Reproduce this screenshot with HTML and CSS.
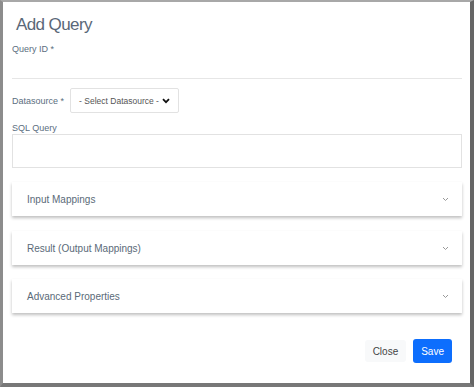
FILE: index.html
```html
<!DOCTYPE html>
<html lang="en">
<head>
<meta charset="UTF-8">
<title>Add Query</title>
<link rel="stylesheet" href="styles.css">
</head>
<body>
<div class="modal">
  <h1 class="modal-title">Add Query</h1>

  <div class="field">
    <label class="field-label">Query ID *</label>
    <div class="line-input"></div>
  </div>

  <div class="field field-inline">
    <label class="field-label">Datasource *</label>
    <div class="select-box">
      <span>- Select Datasource -</span>
      <svg width="8" height="6" viewBox="0 0 8 6"><path d="M1 1.2 L4 4.2 L7 1.2" fill="none" stroke="#111" stroke-width="1.8"/></svg>
    </div>
  </div>

  <div class="field field-sql">
    <label class="field-label">SQL Query</label>
    <div class="text-area"></div>
  </div>

  <div class="panel">
    <span>Input Mappings</span>
    <svg class="chev" width="7" height="5" viewBox="0 0 7 5"><path d="M1 1 L3.5 3.5 L6 1" fill="none" stroke="#999" stroke-width="1"/></svg>
  </div>
  <div class="panel">
    <span>Result (Output Mappings)</span>
    <svg class="chev" width="7" height="5" viewBox="0 0 7 5"><path d="M1 1 L3.5 3.5 L6 1" fill="none" stroke="#999" stroke-width="1"/></svg>
  </div>
  <div class="panel panel-last">
    <span>Advanced Properties</span>
    <svg class="chev" width="7" height="5" viewBox="0 0 7 5"><path d="M1 1 L3.5 3.5 L6 1" fill="none" stroke="#999" stroke-width="1"/></svg>
  </div>

  <div class="footer">
    <button class="btn btn-close">Close</button>
    <button class="btn btn-save">Save</button>
  </div>
</div>
</body>
</html>
```

FILE: styles.css
```css
body {
  margin: 0;
  font-family: 'Liberation Sans', Arial, sans-serif;
  background-color: #ffffff;
}

.modal {
  width: 474px;
  height: 387px;
  box-sizing: border-box;
  border-top: 2px solid #a8a8a8;
  border-left: 3px solid #8c8c8c;
  border-right: 4px solid #666666;
  border-bottom: 4px solid #777777;
  padding: 0 8px 0 9px;
  background-color: #ffffff;
  display: flex;
  flex-direction: column;
}

.modal-title {
  font-size: 17px;
  letter-spacing: -0.6px;
  font-weight: normal;
  color: #5a6878;
  margin: 0;
  padding: 12px 0 0 4px;
  line-height: 22px;
}

.field-label {
  font-size: 9px;
  line-height: 12px;
  color: #5b6e80;
  display: block;
  white-space: nowrap;
}

.field {
  margin-top: 7px;
}

.line-input {
  height: 23px;
  border-bottom: 1px solid #e6e6e6;
}

.field-inline {
  display: flex;
  align-items: center;
  margin-top: 9px;
}

.field-inline .field-label {
  margin-right: 6px;
}

.select-box {
  height: 23px;
  width: 107px;
  border: 1px solid #e2e2e2;
  border-radius: 2px;
  display: flex;
  align-items: center;
  justify-content: center;
  gap: 3px;
  font-size: 8.5px;
  color: #555;
}

.field-sql {
  margin-top: 9px;
}

.text-area {
  height: 32px;
  border: 1px solid #e2e2e2;
}

.panel {
  height: 34px;
  margin-top: 14px;
  background-color: #ffffff;
  box-shadow: 0 2px 3px rgba(0, 0, 0, 0.25);
  display: flex;
  align-items: center;
  justify-content: space-between;
  padding: 0 13px 0 15px;
  font-size: 10px;
  color: #5a6a78;
}

.panel + .panel {
  margin-top: 15px;
}

.panel + .panel-last {
  margin-top: 14px;
}

.footer {
  margin-top: auto;
  margin-bottom: 20px;
  display: flex;
  align-items: center;
  justify-content: flex-end;
  gap: 7px;
  padding-right: 10px;
}

.btn {
  font-family: 'Liberation Sans', Arial, sans-serif;
  font-size: 10px;
  border: none;
  border-radius: 3px;
  height: 22px;
  padding: 0 8px;
}

.btn-close {
  background-color: #f8f9fa;
  color: #444;
}

.btn-save {
  background-color: #0d6efd;
  color: #ffffff;
  height: 24px;
}
```
